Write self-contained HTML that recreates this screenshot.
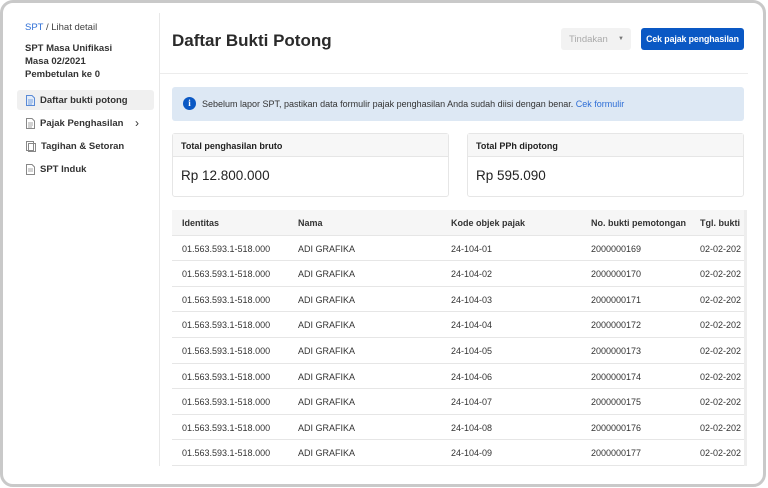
<!DOCTYPE html>
<html><head><style>
*{margin:0;padding:0;box-sizing:border-box}
body{width:768px;height:488px;background:#fff;font-family:"Liberation Sans",sans-serif;color:#222;position:relative;overflow:hidden}
.frame{position:absolute;left:0;top:0;width:766px;height:487px;border:3px solid #c9c9c9;border-radius:13px;background:#fff;overflow:hidden}
.a{position:absolute}
.side{font-size:9.5px}
.nav{position:absolute;left:14px;width:137px;height:20px;font-size:9.5px;font-weight:bold;display:flex;align-items:center;padding-left:9px;color:#333}
.nav svg{margin-right:5px}
.rows{position:absolute;left:172px;top:210px;width:572px}
.tr{height:25.6px;border-bottom:1px solid #e6e6e6;position:relative;font-size:9px;color:#333}
.tr span{position:absolute;top:8px}
.th{background:#f6f6f6;font-weight:bold;font-size:9px}
</style></head><body><div class="frame">
<div class="a side" style="left:22px;top:19px;color:#444"><span style="color:#2f6fd6">SPT</span> / Lihat detail</div>
<div class="a side" style="left:22px;top:39px;line-height:13px;font-weight:bold;color:#333">SPT Masa Unifikasi<br>Masa 02/2021<br>Pembetulan ke 0</div>
<div class="nav" style="top:87px;background:#f0f0f0;border-radius:3px"><svg width="9" height="11" viewBox="0 0 9 11"><path d="M.5.5h5.5l2.5 2.5v7.5h-8z" fill="#e3ecf8" stroke="#5a8ad6"/><path d="M2 5h5M2 7h5M2 9h4" stroke="#5a8ad6" stroke-width=".7"/></svg>Daftar bukti potong</div>
<div class="nav" style="top:110px"><svg width="9" height="11" viewBox="0 0 9 11"><path d="M.5.5h5.5l2.5 2.5v7.5h-8z" fill="none" stroke="#888"/><path d="M2 5h5M2 7h5M2 9h4" stroke="#888" stroke-width=".7"/></svg>Pajak Penghasilan<span style="position:absolute;left:118px;font-weight:normal;font-size:12px">&#8250;</span></div>
<div class="nav" style="top:133px"><svg width="10" height="11" viewBox="0 0 10 11"><path d="M.5.5h7v9h-7z M2.5 2.5h7v8h-7z" fill="none" stroke="#888"/></svg>Tagihan &amp; Setoran</div>
<div class="nav" style="top:156px"><svg width="9" height="11" viewBox="0 0 9 11"><path d="M.5.5h5.5l2.5 2.5v7.5h-8z" fill="none" stroke="#888"/><path d="M2 5h5M2 7h5" stroke="#888" stroke-width=".7"/></svg>SPT Induk</div>
<div class="a" style="left:156px;top:10px;width:1px;height:453px;background:#e8e8e8"></div>
<div class="a" style="left:169px;top:28px;font-size:17px;font-weight:bold;color:#2a2a2a">Daftar Bukti Potong</div>
<div class="a" style="left:558px;top:25px;width:70px;height:22px;background:#f2f2f2;border-radius:3px;font-size:9.5px;color:#aaa;padding:6px 0 0 8px">Tindakan<span style="position:absolute;left:57px;top:8px;font-size:6px;color:#777">&#9660;</span></div>
<div class="a" style="left:638px;top:25px;width:103px;height:22px;background:#0a58c4;border-radius:3px;font-size:8.8px;color:#fff;font-weight:bold;text-align:center;padding-top:6px;white-space:nowrap;letter-spacing:-0.1px">Cek pajak penghasilan</div>
<div class="a" style="left:157px;top:70px;width:588px;height:1px;background:#ececec"></div>
<div class="a" style="left:169px;top:84px;width:572px;height:34px;background:#dde8f4;border-radius:3px;font-size:9px;color:#333;padding:12px 0 0 30px"><span style="position:absolute;left:11px;top:10px;width:13px;height:13px;border-radius:50%;background:#0a58c4;color:#fff;font-size:9px;font-weight:bold;text-align:center;line-height:13px;font-family:'Liberation Serif',serif">i</span>Sebelum lapor SPT, pastikan data formulir pajak penghasilan Anda sudah diisi dengan benar. <span style="color:#2f6fd6">Cek formulir</span></div>
<div class="a" style="left:169px;top:130px;width:277px;height:64px;border:1px solid #e6e6e6;border-radius:3px"><div style="height:23px;background:#f7f7f7;border-bottom:1px solid #e6e6e6;font-size:9px;font-weight:bold;padding:7px 8px">Total penghasilan bruto</div><div style="font-size:13.5px;padding:11px 8px">Rp 12.800.000</div></div>
<div class="a" style="left:464px;top:130px;width:277px;height:64px;border:1px solid #e6e6e6;border-radius:3px"><div style="height:23px;background:#f7f7f7;border-bottom:1px solid #e6e6e6;font-size:9px;font-weight:bold;padding:7px 8px">Total PPh dipotong</div><div style="font-size:13.5px;padding:11px 8px">Rp 595.090</div></div>
<div class="rows" style="left:169px;top:207px">
<div class="tr th"><span style="left:10px">Identitas</span><span style="left:126px">Nama</span><span style="left:279px">Kode objek pajak</span><span style="left:419px">No. bukti pemotongan</span><span style="left:528px;white-space:nowrap">Tgl. bukti</span></div>
<div class="tr"><span style="left:10px">01.563.593.1-518.000</span><span style="left:126px">ADI GRAFIKA</span><span style="left:279px">24-104-01</span><span style="left:419px">2000000169</span><span style="left:528px">02-02-202</span></div>
<div class="tr"><span style="left:10px">01.563.593.1-518.000</span><span style="left:126px">ADI GRAFIKA</span><span style="left:279px">24-104-02</span><span style="left:419px">2000000170</span><span style="left:528px">02-02-202</span></div>
<div class="tr"><span style="left:10px">01.563.593.1-518.000</span><span style="left:126px">ADI GRAFIKA</span><span style="left:279px">24-104-03</span><span style="left:419px">2000000171</span><span style="left:528px">02-02-202</span></div>
<div class="tr"><span style="left:10px">01.563.593.1-518.000</span><span style="left:126px">ADI GRAFIKA</span><span style="left:279px">24-104-04</span><span style="left:419px">2000000172</span><span style="left:528px">02-02-202</span></div>
<div class="tr"><span style="left:10px">01.563.593.1-518.000</span><span style="left:126px">ADI GRAFIKA</span><span style="left:279px">24-104-05</span><span style="left:419px">2000000173</span><span style="left:528px">02-02-202</span></div>
<div class="tr"><span style="left:10px">01.563.593.1-518.000</span><span style="left:126px">ADI GRAFIKA</span><span style="left:279px">24-104-06</span><span style="left:419px">2000000174</span><span style="left:528px">02-02-202</span></div>
<div class="tr"><span style="left:10px">01.563.593.1-518.000</span><span style="left:126px">ADI GRAFIKA</span><span style="left:279px">24-104-07</span><span style="left:419px">2000000175</span><span style="left:528px">02-02-202</span></div>
<div class="tr"><span style="left:10px">01.563.593.1-518.000</span><span style="left:126px">ADI GRAFIKA</span><span style="left:279px">24-104-08</span><span style="left:419px">2000000176</span><span style="left:528px">02-02-202</span></div>
<div class="tr"><span style="left:10px">01.563.593.1-518.000</span><span style="left:126px">ADI GRAFIKA</span><span style="left:279px">24-104-09</span><span style="left:419px">2000000177</span><span style="left:528px">02-02-202</span></div>
</div>
<div class="a" style="left:741px;top:207px;width:3px;height:256px;background:#eee"></div>
</div></body></html>
